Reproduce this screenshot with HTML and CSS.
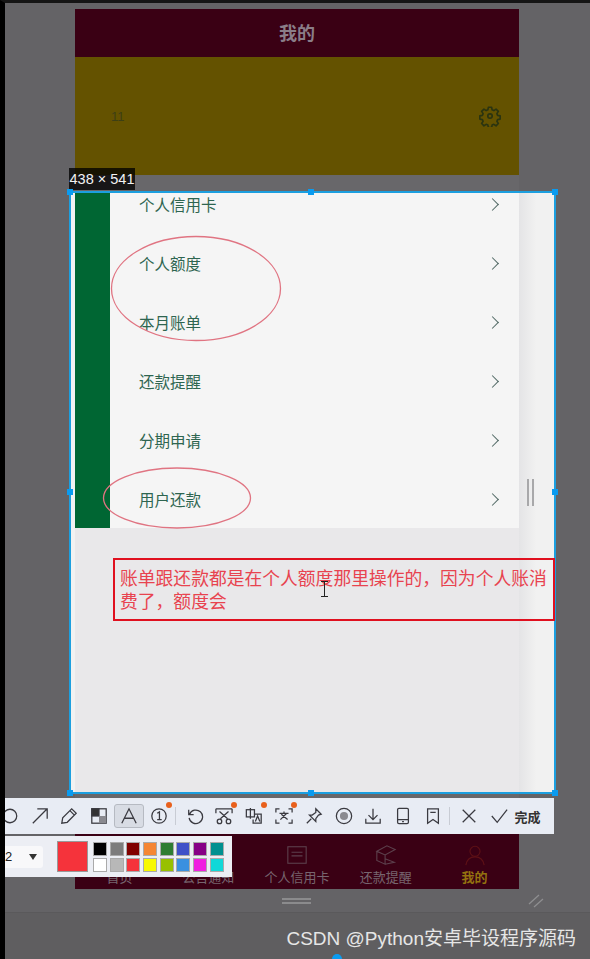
FILE: index.html
```html
<html>
<head>
    <meta charset="utf-8">
    <link rel="stylesheet" href="styles.css">
</head>
<body>
    <div class="screen">
        <!-- App behind the capture overlay -->
        <div class="phone">
            <div class="app-header">我的</div>
            <div class="banner">
                <span class="banner-name">11</span>
                <svg class="gear" viewBox="0 0 24 24" fill="none" stroke="#2a3410" stroke-width="1.8" stroke-linejoin="round">
                    <path d="M10.2 2.5h3.6l.5 2.8 1.9.8 2.4-1.6 2.5 2.5-1.6 2.4.8 1.9 2.8.5v3.6l-2.8.5-.8 1.9 1.6 2.4-2.5 2.5-2.4-1.6-1.9.8-.5 2.8h-3.6l-.5-2.8-1.9-.8-2.4 1.6-2.5-2.5 1.6-2.4-.8-1.9-2.8-.5v-3.6l2.8-.5.8-1.9-1.6-2.4 2.5-2.5 2.4 1.6 1.9-.8z"/>
                    <circle cx="12" cy="12" r="2.4"/>
                </svg>
            </div>
            <div class="app-body"></div>
            <div class="app-nav">
                <div class="nav-item"><span class="nav-icon"></span><span>首页</span></div>
                <div class="nav-item"><span class="nav-icon"></span><span>公告通知</span></div>
                <div class="nav-item">
                    <svg class="nav-icon" viewBox="0 0 24 24" fill="none" stroke="#5c3f4c" stroke-width="1.2">
                        <rect x="2" y="3" width="20" height="18"/>
                        <path d="M6 9h12M6 13h12"/>
                    </svg>
                    <span>个人信用卡</span>
                </div>
                <div class="nav-item">
                    <svg class="nav-icon" viewBox="0 0 24 24" fill="none" stroke="#5c3f4c" stroke-width="1.2">
                        <path d="M2 8l11-6 9 4-11 6zM2 8v10l9 4V12M11 16l10 4-10 2"/>
                    </svg>
                    <span>还款提醒</span>
                </div>
                <div class="nav-item nav-active">
                    <svg class="nav-icon" viewBox="0 0 24 24" fill="none" stroke="#5e1016" stroke-width="1.2">
                        <circle cx="12" cy="8" r="5.5"/>
                        <path d="M2 23c1-6 5-9 10-9s9 3 10 9"/>
                    </svg>
                    <span>我的</span>
                </div>
            </div>
        </div>

        <div class="handle-bar">
            <span class="grip-lines"></span>
            <svg class="resize-mark" viewBox="0 0 16 14" fill="none" stroke="#8e8e90" stroke-width="1.3">
                <path d="M1 10L11 1M6 13L15 5"/>
            </svg>
        </div>
        <div class="bottom-strip">
            <span class="watermark">CSDN @Python安卓毕设程序源码</span>
        </div>

        <!-- Capture selection -->
        <div class="size-label">438 × 541</div>
        <div class="selection">
            <div class="sel-phone">
                <div class="list-wrap">
                    <div class="green-bar"></div>
                    <div class="list">
                        <div class="row"><span>个人信用卡</span><i class="chevron"></i></div>
                        <div class="row"><span>个人额度</span><i class="chevron"></i></div>
                        <div class="row"><span>本月账单</span><i class="chevron"></i></div>
                        <div class="row"><span>还款提醒</span><i class="chevron"></i></div>
                        <div class="row"><span>分期申请</span><i class="chevron"></i></div>
                        <div class="row"><span>用户还款</span><i class="chevron"></i></div>
                    </div>
                </div>
            </div>
            <div class="sel-side"><span class="side-grip"></span></div>
            <span class="dot dot-tl"></span>
            <span class="dot dot-tm"></span>
            <span class="dot dot-tr"></span>
            <span class="dot dot-ml"></span>
            <span class="dot dot-mr"></span>
            <span class="dot dot-bl"></span>
            <span class="dot dot-bm"></span>
            <span class="dot dot-br"></span>
        </div>

        <svg class="marks" viewBox="0 0 590 959" fill="none" stroke="#e07482" stroke-width="1.3">
            <ellipse cx="196" cy="288.5" rx="84.5" ry="52"/>
            <ellipse cx="177" cy="498" rx="73.5" ry="30"/>
        </svg>

        <div class="note">账单跟还款都是在个人额度那里操作的，因为个人账消费了，额度会</div>
        <svg class="text-cursor" viewBox="0 0 9 16" fill="none" stroke="#222" stroke-width="1">
            <path d="M1 .5h7M4.5.5v15M1 15.5h7"/>
        </svg>

        <!-- Capture toolbar -->
        <div class="toolbar">
            <div class="tool"><svg viewBox="0 0 20 20"><circle cx="10" cy="10" r="7.5"/></svg></div>
            <div class="tool"><svg viewBox="0 0 20 20"><path d="M2 18L18 2M7 2h11v11"/></svg></div>
            <div class="tool"><svg viewBox="0 0 20 20"><path d="M2 18l1-6L13 2l5 5L8 17zM11 4l5 5"/></svg></div>
            <div class="tool"><svg viewBox="0 0 20 20"><rect x="2" y="2" width="16" height="16"/><rect class="fill-dark" x="2" y="2" width="8" height="8"/><rect class="fill-grey" x="10" y="10" width="8" height="8"/></svg></div>
            <div class="tool tool-on"><svg viewBox="0 0 20 20"><path d="M2 18L10 2l8 16M5 12.5h10"/></svg></div>
            <div class="tool badge"><svg viewBox="0 0 20 20"><circle cx="10" cy="10" r="8"/><path d="M8 7l2.5-1.5V14M8 14h5"/></svg></div>
            <div class="tool-sep"></div>
            <div class="tool"><svg viewBox="0 0 20 20"><path d="M4 8a7.5 7.5 0 1 1-.5 4M3 3v5.5h5.5"/></svg></div>
            <div class="tool badge"><svg viewBox="0 0 20 20"><path d="M1 2h18M1 2v5M19 2v5M5 5l9 8M15 5l-9 8"/><circle cx="5" cy="16" r="2.5"/><circle cx="15" cy="16" r="2.5"/></svg></div>
            <div class="tool badge"><svg viewBox="0 0 20 20"><rect x="1.5" y="3" width="9" height="8"/><path d="M6 1v12M11 8h7v10h-9v-4M11.5 16l2.5-6 2.5 6"/></svg></div>
            <div class="tool badge"><svg viewBox="0 0 20 20"><path d="M1 6V2h4M15 2h4v4M1 14v4h4M19 14v4h-4M5 7h10M10 5v2M6 14l7-7M7 8l7 6"/></svg></div>
            <div class="tool"><svg viewBox="0 0 20 20"><path d="M12 2l6 6-3 1-3 4 0 3-7-7 3 0 4-3zM7 13l-5 5"/></svg></div>
            <div class="tool"><svg viewBox="0 0 20 20"><circle cx="10" cy="10" r="8.5"/><circle class="fill-grey" cx="10" cy="10" r="4.5"/></svg></div>
            <div class="tool"><svg viewBox="0 0 20 20"><path d="M10 2v12M5 9l5 5 5-5M2 13v5h16v-5"/></svg></div>
            <div class="tool"><svg viewBox="0 0 20 20"><rect x="4" y="1.5" width="12" height="17" rx="1.5"/><path d="M4 14h12M9 16.2h2"/></svg></div>
            <div class="tool"><svg viewBox="0 0 20 20"><path d="M4 2h12v16l-6-4-6 4zM7 6h6"/></svg></div>
            <div class="tool-sep"></div>
            <div class="tool"><svg viewBox="0 0 20 20"><path d="M3 3l14 14M17 3L3 17"/></svg></div>
            <div class="tool"><svg viewBox="0 0 20 20"><path d="M2 10l6 7L19 3"/></svg></div>
            <span class="done">完成</span>
        </div>

        <div class="palette">
            <div class="size-select"><span>2</span><i class="caret"></i></div>
            <div class="current-color"></div>
            <div class="swatches">
                <span class="swatch c-black"></span>
                <span class="swatch c-grey"></span>
                <span class="swatch c-maroon"></span>
                <span class="swatch c-orange"></span>
                <span class="swatch c-green"></span>
                <span class="swatch c-blue"></span>
                <span class="swatch c-purple"></span>
                <span class="swatch c-teal"></span>
                <span class="swatch c-white"></span>
                <span class="swatch c-silver"></span>
                <span class="swatch c-red"></span>
                <span class="swatch c-yellow"></span>
                <span class="swatch c-lime"></span>
                <span class="swatch c-sky"></span>
                <span class="swatch c-pink"></span>
                <span class="swatch c-cyan"></span>
            </div>
        </div>

        <span class="blue-dot"></span>
    </div>
</body>
</html>
```

FILE: styles.css
```css
body {
    margin: 0;
    background-color: #000;
    font-family: "Liberation Sans", "Noto Sans CJK SC", sans-serif;
}
.screen {
    position: relative;
    width: 590px;
    height: 959px;
    overflow: hidden;
    box-sizing: border-box;
    background-color: #646366;
    border-left: 5px solid #000;
    border-top: 3px solid #151515;
    display: flex;
    flex-direction: column;
    align-items: flex-start;
}

/* app behind the overlay */
.phone {
    margin: 6px 0 0 70px;
    width: 444px;
    height: 880px;
    display: flex;
    flex-direction: column;
    flex-shrink: 0;
}
.app-header {
    height: 48px;
    flex-shrink: 0;
    box-sizing: border-box;
    padding-bottom: 3px;
    background-color: #3a0014;
    color: #8a7d88;
    font-family: "Noto Sans CJK SC", sans-serif;
    font-size: 18px;
    font-weight: 700;
    display: flex;
    justify-content: center;
    align-items: center;
}
.banner {
    height: 118px;
    flex-shrink: 0;
    background-color: #645200;
    display: flex;
    justify-content: space-between;
    align-items: center;
    padding: 0 18px 0 36px;
    box-sizing: border-box;
}
.banner-name {
    color: #3c3f15;
    font-size: 13px;
}
.gear {
    width: 22px;
    height: 22px;
}
.app-body {
    flex: 1;
    background-color: #68676a;
}
.app-nav {
    height: 57px;
    flex-shrink: 0;
    background-color: #3a0014;
    display: flex;
}
.nav-item {
    flex: 1;
    display: flex;
    flex-direction: column;
    align-items: center;
    justify-content: flex-end;
    gap: 2px;
    padding-bottom: 3px;
    color: #77656f;
    font-family: "Noto Sans CJK SC", sans-serif;
    font-size: 13px;
    line-height: 18px;
}
.nav-active {
    color: #94720f;
    font-weight: 700;
}
.nav-icon {
    width: 22px;
    height: 22px;
}

/* under the phone */
.handle-bar {
    width: 585px;
    height: 23px;
    flex-shrink: 0;
    display: flex;
    align-items: center;
    justify-content: flex-end;
    box-sizing: border-box;
    padding-right: 46px;
    position: relative;
}
.grip-lines {
    position: absolute;
    left: 277px;
    top: 9px;
    width: 29px;
    height: 2px;
    border-top: 2px solid #8b8b8d;
    border-bottom: 2px solid #8b8b8d;
}
.resize-mark {
    width: 16px;
    height: 14px;
}
.bottom-strip {
    width: 585px;
    flex: 1;
    background-color: #5f5e60;
    border-top: 1px solid #5a595b;
    box-sizing: border-box;
    display: flex;
    justify-content: flex-end;
    padding: 13px 14px 0 0;
}
.watermark {
    color: #e6e6e6;
    font-size: 19px;
    line-height: 26px;
    white-space: nowrap;
}

/* capture overlay */
.size-label {
    position: absolute;
    left: 64px;
    top: 165px;
    width: 66px;
    height: 22px;
    background: rgba(0, 0, 0, 0.78);
    color: #f2f2f2;
    font-size: 14.5px;
    line-height: 22px;
    text-align: center;
    white-space: nowrap;
}
.selection {
    position: absolute;
    left: 64px;
    top: 188px;
    width: 487px;
    height: 603px;
    box-sizing: border-box;
    border: 2px solid #1c9fdf;
    background-color: #f2f2f2;
    padding-left: 4px;
    display: flex;
}
.sel-phone {
    width: 444px;
    background-color: #e9e8ea;
}
.list-wrap {
    height: 335px;
    overflow: hidden;
    display: flex;
}
.green-bar {
    width: 35px;
    background-color: #006633;
}
.list {
    flex: 1;
    margin-top: -17px;
    background-color: #f5f5f5;
}
.row {
    height: 59px;
    display: flex;
    justify-content: space-between;
    align-items: center;
    padding: 0 22px 0 29px;
    color: #2e6550;
    font-family: "Noto Sans CJK SC", sans-serif;
    font-size: 15.5px;
}
.row span {
    padding-bottom: 4px;
}
.chevron {
    width: 8px;
    height: 8px;
    margin-bottom: 2px;
    border-top: 1.8px solid #4e6662;
    border-right: 1.8px solid #4e6662;
    transform: rotate(45deg);
}
.sel-side {
    flex: 1;
    display: flex;
    align-items: center;
    justify-content: flex-end;
    padding-right: 20px;
    background: linear-gradient(90deg, #e4e4e6, #f1f1f1 50%);
}
.side-grip {
    width: 3px;
    height: 27px;
    border-left: 2px solid #a8a8aa;
    border-right: 2px solid #a8a8aa;
}
.dot {
    position: absolute;
    width: 6px;
    height: 6px;
    background-color: #0a9bf0;
}
.dot-tl { left: -4px; top: -4px; }
.dot-tm { left: 237px; top: -4px; }
.dot-tr { right: -4px; top: -4px; }
.dot-ml { left: -4px; top: 296px; }
.dot-mr { right: -4px; top: 296px; }
.dot-bl { left: -4px; bottom: -4px; }
.dot-bm { left: 237px; bottom: -4px; }
.dot-br { right: -4px; bottom: -4px; }

.marks {
    position: absolute;
    left: -5px;
    top: -3px;
    width: 590px;
    height: 959px;
}
.note {
    position: absolute;
    left: 108px;
    top: 555px;
    width: 442px;
    height: 63px;
    box-sizing: border-box;
    border: 2px solid #e0101f;
    padding: 6px 4px 0 5px;
    color: #e8434f;
    font-family: "Noto Sans CJK SC", sans-serif;
    font-size: 17.8px;
    line-height: 23px;
}
.text-cursor {
    position: absolute;
    left: 315px;
    top: 578px;
    width: 9px;
    height: 16px;
}

.toolbar {
    position: absolute;
    left: 0;
    top: 795px;
    width: 549px;
    height: 36px;
    background-color: #e8ecf4;
    display: flex;
    align-items: center;
    overflow: hidden;
    box-sizing: border-box;
}
.tool {
    position: relative;
    width: 29.8px;
    height: 24px;
    flex-shrink: 0;
    display: flex;
    align-items: center;
    justify-content: center;
    box-sizing: border-box;
}
.tool:first-child {
    margin-left: -10px;
}
.tool svg {
    width: 18px;
    height: 18px;
    fill: none;
    stroke: #3a3a40;
    stroke-width: 1.4;
}
.tool svg .fill-dark {
    fill: #333;
}
.tool svg .fill-grey {
    fill: #8a8a90;
    stroke: none;
}
.tool-on {
    background-color: #d8dce4;
    border: 1px solid #b6bac2;
    border-radius: 3px;
}
.badge::after {
    content: "";
    position: absolute;
    right: 2px;
    top: -2px;
    width: 6px;
    height: 6px;
    border-radius: 50%;
    background-color: #e8601c;
}
.tool-sep {
    width: 6px;
    height: 18px;
    flex-shrink: 0;
    box-sizing: border-box;
    border-left: 1px solid #c8ccd4;
    margin-left: 1px;
    margin-right: -1px;
}
.done {
    font-family: "Noto Sans CJK SC", sans-serif;
    font-size: 13px;
    font-weight: 700;
    color: #333;
    margin-left: 1px;
}

.palette {
    position: absolute;
    left: 0;
    top: 833px;
    width: 227px;
    height: 41px;
    background-color: #eceef4;
    display: flex;
    align-items: center;
    gap: 14px;
}
.size-select {
    width: 38px;
    height: 22px;
    background-color: #f8f8fa;
    border-radius: 0 3px 3px 0;
    display: flex;
    align-items: center;
    justify-content: space-between;
    box-sizing: border-box;
    padding: 0 6px 0 0;
    font-size: 13px;
    color: #222;
}
.caret {
    width: 0;
    height: 0;
    border-left: 4.5px solid transparent;
    border-right: 4.5px solid transparent;
    border-top: 6px solid #333;
}
.current-color {
    width: 31px;
    height: 31px;
    box-sizing: border-box;
    background-color: #f5333b;
    border: 1px solid #999;
}
.swatches {
    display: grid;
    grid-template-columns: repeat(8, 14px);
    grid-auto-rows: 14px;
    gap: 2px 2.67px;
    margin-left: -9px;
}
.swatch {
    box-sizing: border-box;
    border: 1px solid #aaa;
}
.c-black { background-color: #000; }
.c-grey { background-color: #7c7c7c; }
.c-maroon { background-color: #800000; }
.c-orange { background-color: #f58634; }
.c-green { background-color: #2e7d32; }
.c-blue { background-color: #3f51c8; }
.c-purple { background-color: #860086; }
.c-teal { background-color: #009090; }
.c-white { background-color: #fff; }
.c-silver { background-color: #b8b8b8; }
.c-red { background-color: #f5333b; }
.c-yellow { background-color: #f8f800; }
.c-lime { background-color: #98c000; }
.c-sky { background-color: #3a90e0; }
.c-pink { background-color: #f020e0; }
.c-cyan { background-color: #10d8d8; }

.blue-dot {
    position: absolute;
    left: 327px;
    top: 951px;
    width: 10px;
    height: 10px;
    border-radius: 50%;
    background-color: #0a9bf0;
}
```
